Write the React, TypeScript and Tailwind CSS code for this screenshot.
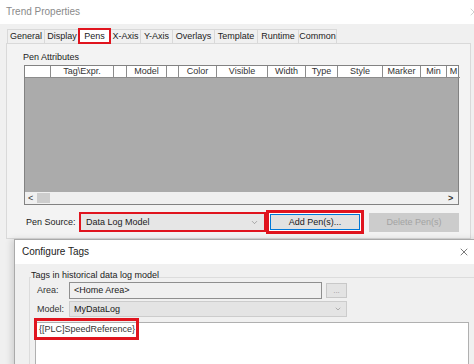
import { ChevronDown, X } from "lucide-react";

const cols: { label: string; w: number }[] = [
  { label: "", w: 26 },
  { label: "Tag\\Expr.", w: 63 },
  { label: "", w: 13 },
  { label: "Model", w: 40 },
  { label: "", w: 12 },
  { label: "Color", w: 38 },
  { label: "Visible", w: 51 },
  { label: "Width", w: 38 },
  { label: "Type", w: 32 },
  { label: "Style", w: 45 },
  { label: "Marker", w: 38 },
  { label: "Min", w: 26 },
  { label: "M", w: 13 },
];

const tabs: { label: string; w: number }[] = [
  { label: "General", w: 37 },
  { label: "Display", w: 35 },
  { label: "Pens", w: 33 },
  { label: "X-Axis", w: 30 },
  { label: "Y-Axis", w: 32 },
  { label: "Overlays", w: 42 },
  { label: "Template", w: 43 },
  { label: "Runtime", w: 41 },
  { label: "Common", w: 39 },
];

export default function App() {
  return (
    <div className="relative h-[364px] w-[474px] overflow-hidden bg-[#f0f0f0] font-['Liberation_Sans',Arial,sans-serif] text-[9px] leading-none text-[#1a1a1a]">
      {/* Trend Properties window */}
      <div className="flex h-[24px] items-center justify-between bg-white pl-[6px]">
        <span className="text-[10px] text-[#8a8a8a]">Trend Properties</span>
        <X className="mr-[-6px] h-[12px] w-[12px] text-[#b0b0b0]" strokeWidth={1.2} />
      </div>

      <div className="px-[6px] pt-[5px]">
        <div className="flex h-[14px] items-end pl-[1px]">
          {tabs.map((t) =>
            t.label === "Pens" ? (
              <div
                key={t.label}
                style={{ width: t.w }}
                className="relative z-10 -mx-[1px] mb-[-1px] flex h-[16px] shrink-0 items-center justify-center border-2 border-[#e0141e] bg-white"
              >
                {t.label}
              </div>
            ) : (
              <div
                key={t.label}
                style={{ width: t.w }}
                className="flex h-[14px] shrink-0 items-center justify-center border border-b-0 border-r-0 border-[#d9d9d9] text-[#222] last:border-r"
              >
                {t.label}
              </div>
            )
          )}
        </div>

        <div className="h-[196px] w-[465px] border border-[#d9d9d9] bg-[#f3f3f3] px-[11px] pt-[9px]">
          <div className="h-[12px] pl-[5px] text-[#222]">Pen Attributes</div>
          <div className="ml-[6px] w-[435px] border border-[#828282]">
            <div className="flex h-[12px] bg-white">
              {cols.map((c, i) => (
                <div
                  key={i}
                  style={{ width: c.w }}
                  className="flex shrink-0 items-center justify-center overflow-hidden border-r border-b border-[#8c8c8c] text-[#333] last:border-r-0"
                >
                  {c.label}
                </div>
              ))}
            </div>
            <div className="h-[114px] bg-[#ababab]" />
            <div className="flex h-[12px] items-center bg-[#f0f0f0]">
              <span className="w-[12px] pl-[3px] text-[#333]">&lt;</span>
              <span className="h-[10px] w-[13px] bg-[#cdcdcd]" />
              <span className="flex-1" />
              <span className="w-[10px] font-bold text-[#333]">&gt;</span>
            </div>
          </div>

          <div className="mt-[5px] flex items-center">
            <span className="w-[61px] whitespace-nowrap pl-[8px] text-[#222]">Pen Source:</span>
            <div className="flex h-[20px] w-[187px] items-center justify-between border-2 border-[#e0141e] bg-[#e6e6e6] px-[5px]">
              <span>Data Log Model</span>
              <ChevronDown className="h-[9px] w-[9px] text-[#777]" strokeWidth={1.5} />
            </div>
            <div className="flex h-[24px] w-[98px] items-center justify-center border-[3px] border-[#e0141e] bg-white p-[1px]">
              <div className="flex h-full w-full items-center justify-center border border-[#0078d7] bg-[#e1e1e1]">
                Add Pen(s)...
              </div>
            </div>
            <div className="ml-[5px] flex h-[19px] w-[90px] items-center justify-center bg-[#cccccc] text-[#a3a3a3]">
              Delete Pen(s)
            </div>
          </div>
        </div>
      </div>

      {/* Configure Tags dialog */}
      <div className="absolute left-[14px] top-[239px] h-[130px] w-[470px] border-l border-t border-[#aaaaaa] shadow-[-3px_0_6px_rgba(0,0,0,0.12)]">
        <div className="flex h-[24px] items-center justify-between bg-white pl-[7px] pr-[14px]">
          <span className="text-[10px] text-[#222]">Configure Tags</span>
          <X className="h-[12px] w-[12px] text-[#333]" strokeWidth={1.3} />
        </div>
        <div className="h-full bg-[#f0f0f0] pl-[14px] pt-[7px]">
          <span className="relative z-10 ml-[2px] bg-[#f0f0f0] text-[#222]">Tags in historical data log model</span>
          <div className="-mt-[3px] h-[120px] w-[450px] border border-[#dcdcdc] pl-[5px] pt-[4px]">
            <div className="flex items-center">
              <span className="w-[34px] pl-[2px] text-[#333]">Area:</span>
              <div className="flex h-[17px] w-[253px] items-center border border-[#8f8f8f] bg-[#f0f0f0] px-[4px]">
                &lt;Home Area&gt;
              </div>
              <div className="ml-[4px] flex h-[15px] w-[21px] items-center justify-center border border-[#c8c8c8] bg-[#e3e3e3] text-[8px] text-[#999]">
                ...
              </div>
            </div>
            <div className="mt-[2px] flex items-center">
              <span className="w-[34px] pl-[2px] text-[#333]">Model:</span>
              <div className="flex h-[16px] w-[278px] items-center justify-between border border-[#cccccc] bg-[#e4e4e4] px-[4px]">
                <span>MyDataLog</span>
                <ChevronDown className="h-[8px] w-[8px] text-[#777]" strokeWidth={1.5} />
              </div>
            </div>
            <div className="relative mt-[5px] h-[60px] w-[434px] border border-[#b0b0b0] bg-white">
              <div className="absolute left-[-2px] top-[-5px] flex h-[22px] w-[105px] items-center border-[3px] border-[#e0141e] pl-[2px] text-[#333]">
                {"{[PLC]SpeedReference}"}
              </div>
            </div>
          </div>
        </div>
      </div>
    </div>
  );
}
